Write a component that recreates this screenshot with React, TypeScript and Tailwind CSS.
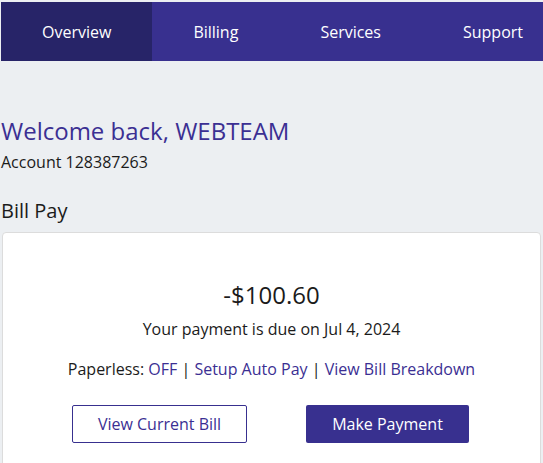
export default function App() {
  const tabs = ["Overview", "Billing", "Services", "Support"]
  return (
    <div className="w-[543px] h-[463px] overflow-hidden bg-[#eceff2] font-['Open_Sans',sans-serif] pt-[2px]">
      <nav className="flex h-[59px] bg-[#38308f] overflow-hidden ml-[1px]">
        {tabs.map((t, i) => (
          <div
            key={t}
            className={`shrink-0 flex items-center px-[41px] text-[16px] text-white ${i === 0 ? "bg-[#272468]" : ""}`}
          >
            {t}
          </div>
        ))}
      </nav>

      <div className="pl-[1px] pt-[55px]">
        <h1 className="text-[24px] leading-[30px] text-[#3b2f93]">Welcome back, WEBTEAM</h1>
        <p className="mt-[6px] text-[16px] leading-[20px] text-[#1b1b1b]">Account 128387263</p>
        <h2 className="mt-[26px] text-[20px] leading-[26px] text-[#1b1b1b]">Bill Pay</h2>
      </div>

      <div className="mt-[8px] ml-[2px] w-[539px] h-[260px] bg-white border border-[#dcdcdc] rounded-[4px] flex flex-col items-center pt-[46px]">
        <div className="text-[24px] leading-[32px] text-[#1b1b1b]">-$100.60</div>
        <div className="mt-[7px] text-[16px] leading-[22px] text-[#1b1b1b]">Your payment is due on Jul 4, 2024</div>
        <div className="mt-[18px] text-[16px] leading-[22px] text-[#1b1b1b]">
          Paperless: <span className="text-[#3b2f93]">OFF</span> | <span className="text-[#3b2f93]">Setup Auto Pay</span> | <span className="text-[#3b2f93]">View Bill Breakdown</span>
        </div>
        <div className="mt-[25px] flex gap-[59px] pr-[2px]">
          <button className="w-[175px] h-[38px] border border-[#38308f] rounded-[2px] text-[16px] text-[#3b2f93] bg-white">
            View Current Bill
          </button>
          <button className="w-[163px] h-[38px] rounded-[2px] text-[16px] text-white bg-[#38308f]">
            Make Payment
          </button>
        </div>
      </div>
    </div>
  )
}
